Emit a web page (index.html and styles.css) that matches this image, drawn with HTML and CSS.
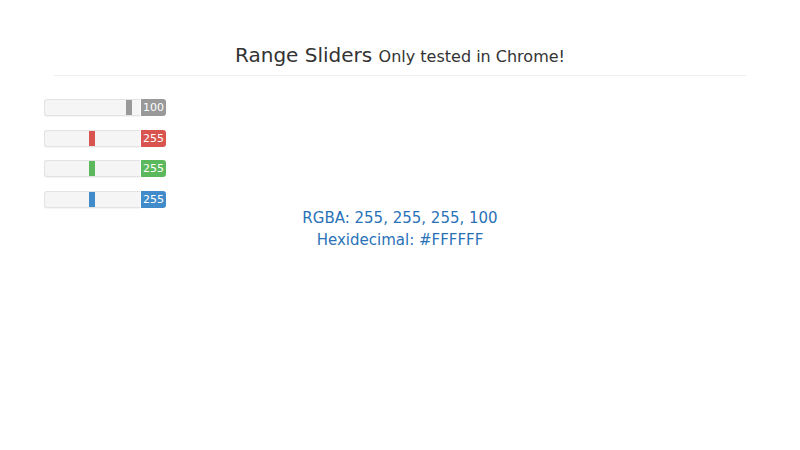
FILE: index.html
```html
<!DOCTYPE html>
<html>
<head>
<meta charset="utf-8">
<link rel="stylesheet" href="styles.css">
</head>
<body>
<div class="page">
  <div class="header">
    <h1 class="title">Range Sliders <small>Only tested in Chrome!</small></h1>
  </div>
  <div class="sliders">
    <div class="row">
      <div class="track"><span class="thumb thumb-gray" style="left:81px"></span></div>
      <span class="badge badge-gray">100</span>
    </div>
    <div class="row">
      <div class="track"><span class="thumb thumb-red" style="left:44px"></span></div>
      <span class="badge badge-red">255</span>
    </div>
    <div class="row">
      <div class="track"><span class="thumb thumb-green" style="left:44px"></span></div>
      <span class="badge badge-green">255</span>
    </div>
    <div class="row">
      <div class="track"><span class="thumb thumb-blue" style="left:44px"></span></div>
      <span class="badge badge-blue">255</span>
    </div>
  </div>
  <div class="output">
    <div>RGBA: 255, 255, 255, 100</div>
    <div>Hexidecimal: #FFFFFF</div>
  </div>
</div>
</body>
</html>
```

FILE: styles.css
```css
html, body {
  margin: 0;
  padding: 0;
  background: #fff;
  font-family: "DejaVu Sans", sans-serif;
  color: #333;
}
.page {
  padding: 0 44px;
}
.header {
  margin: 0 10px;
  padding-top: 42px;
  padding-bottom: 5px;
  border-bottom: 1px solid #eee;
  text-align: center;
}
.title {
  margin: 0;
  font-size: 20px;
  font-weight: normal;
  line-height: 26px;
  color: #333;
}
.title small {
  font-size: 16px;
  color: #333;
}
.sliders {
  margin-top: 23px;
  display: flex;
  flex-direction: column;
  gap: 13.5px;
}
.row {
  display: flex;
  align-items: flex-start;
  height: 17px;
}
.track {
  position: relative;
  width: 95px;
  height: 15px;
  background: #f5f5f5;
  border: 1px solid #e3e3e3;
  border-right: none;
  border-radius: 3px 0 0 3px;
  box-shadow: 0 1px 1px rgba(0,0,0,0.05);
}
.thumb {
  position: absolute;
  top: 0;
  width: 6px;
  height: 15px;
}
.thumb-gray { background: #999; }
.thumb-red { background: #d9534f; }
.thumb-green { background: #5cb85c; }
.thumb-blue { background: #428bca; }
.badge {
  width: 25px;
  height: 17px;
  margin-left: 1px;
  border-radius: 0 3px 3px 0;
  color: #fff;
  font-size: 11px;
  line-height: 17px;
  text-align: center;
}
.badge-gray { background: #999; }
.badge-red { background: #d9534f; }
.badge-green { background: #5cb85c; }
.badge-blue { background: #428bca; }
.output {
  margin-top: -1px;
  text-align: center;
  color: #2a72b8;
  font-size: 15px;
  line-height: 22px;
}
```
